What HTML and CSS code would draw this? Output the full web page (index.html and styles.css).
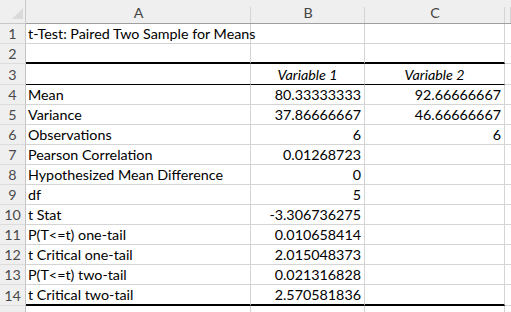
FILE: index.html
```html
<!DOCTYPE html>
<html>
<head>
<meta charset="utf-8">
<link rel="stylesheet" href="styles.css">
</head>
<body>
<div class="sheet">
  <div class="hd corner"><svg class="tri" width="11" height="11" viewBox="0 0 11 11"><polygon points="11,0 11,11 0,11" fill="#dadada"/></svg></div>
  <div class="hd col">A</div>
  <div class="hd col">B</div>
  <div class="hd col">C</div>
  <div class="hd col last"></div>

  <div class="rn">1</div><div class="c a over">t-Test: Paired Two Sample for Means</div><div class="c"></div><div class="c"></div><div class="c d"></div>
  <div class="rn r2">2</div><div class="c a thick"></div><div class="c thick"></div><div class="c thick"></div><div class="c d"></div>
  <div class="rn r3">3</div><div class="c a thin"></div><div class="c ctr thin"><i>Variable 1</i></div><div class="c ctr thin"><i>Variable 2</i></div><div class="c d"></div>
  <div class="rn">4</div><div class="c a">Mean</div><div class="c num">80.33333333</div><div class="c num">92.66666667</div><div class="c d"></div>
  <div class="rn">5</div><div class="c a">Variance</div><div class="c num">37.86666667</div><div class="c num">46.66666667</div><div class="c d"></div>
  <div class="rn">6</div><div class="c a">Observations</div><div class="c num">6</div><div class="c num">6</div><div class="c d"></div>
  <div class="rn">7</div><div class="c a">Pearson Correlation</div><div class="c num">0.01268723</div><div class="c"></div><div class="c d"></div>
  <div class="rn">8</div><div class="c a">Hypothesized Mean Difference</div><div class="c num">0</div><div class="c"></div><div class="c d"></div>
  <div class="rn">9</div><div class="c a">df</div><div class="c num">5</div><div class="c"></div><div class="c d"></div>
  <div class="rn">10</div><div class="c a">t Stat</div><div class="c num">-3.306736275</div><div class="c"></div><div class="c d"></div>
  <div class="rn">11</div><div class="c a">P(T&lt;=t) one-tail</div><div class="c num">0.010658414</div><div class="c"></div><div class="c d"></div>
  <div class="rn">12</div><div class="c a">t Critical one-tail</div><div class="c num">2.015048373</div><div class="c"></div><div class="c d"></div>
  <div class="rn">13</div><div class="c a">P(T&lt;=t) two-tail</div><div class="c num">0.021316828</div><div class="c"></div><div class="c d"></div>
  <div class="rn r14">14</div><div class="c a thick">t Critical two-tail</div><div class="c num thick">2.570581836</div><div class="c thick"></div><div class="c d"></div>
  <div class="rn"></div><div class="c a"></div><div class="c"></div><div class="c"></div><div class="c d"></div>
</div>
</body>
</html>
```
FILE: styles.css
```css
html, body {
  margin: 0;
  padding: 0;
  background: #ffffff;
  overflow: hidden;
}
.sheet {
  display: grid;
  grid-template-columns: 26px 225px 114px 140px 1fr;
  grid-template-rows: 24px 20px 20px 21px repeat(10, 20px) 21px 20px;
  width: 511px;
  height: 312px;
  overflow: hidden;
  font-family: Lato, "Liberation Sans", sans-serif;
  font-size: 14.3px;
  color: #000;
}
.hd {
  box-sizing: border-box;
  background: linear-gradient(#d4d4d4, #d4d4d4) right 7px / 1px 16px no-repeat, #efefef;
  border-bottom: 1px solid #9f9f9f;
  color: #444;
  display: flex;
  align-items: center;
  justify-content: center;
  padding-top: 2px;
}
.corner {
  background: #efefef;
  border-right: 1px solid #c8c8c8;
  border-bottom: 1px solid #c8c8c8;
  align-items: flex-start;
  justify-content: flex-start;
  padding: 8px 0 0 12px;
}
.tri { display: block; }
.rn {
  box-sizing: border-box;
  background: #efefef;
  border-right: 1px solid #c4c4c4;
  border-bottom: 1px solid #dcdcdc;
  color: #4a4a4a;
  display: flex;
  align-items: flex-end;
  justify-content: center;
  line-height: 18px;
  padding-bottom: 0;
}
.c {
  box-sizing: border-box;
  border-right: 1px solid #d4d4d4;
  border-bottom: 1px solid #d4d4d4;
  display: flex;
  align-items: flex-end;
  line-height: 18px;
  padding: 0 3px 0 2px;
  white-space: nowrap;
}
.over {
  overflow: visible;
  position: relative;
  z-index: 1;
}
.num { justify-content: flex-end; }
.ctr { justify-content: center; padding-left: 0; padding-right: 0; }
.thick { border-bottom: 2px solid #000; }
.thin { border-bottom: 1px solid #000; }
.d { border-right: none; }
```
